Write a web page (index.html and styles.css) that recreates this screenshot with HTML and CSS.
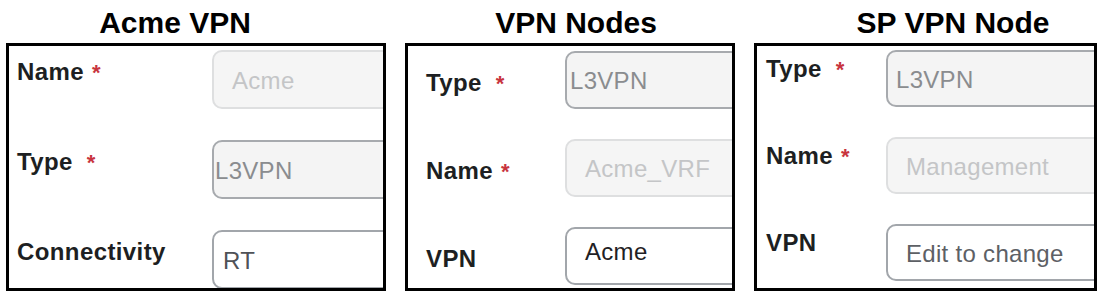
FILE: index.html
```html
<!DOCTYPE html>
<html lang="en">
<head>
  <meta charset="UTF-8" />
  <title>VPN forms</title>
  <link rel="stylesheet" href="styles.css">
</head>
<body>
  <div class="board">

    <!-- Acme VPN -->
    <section class="card card-acme">
      <h2 class="card-title">Acme VPN</h2>
      <div class="panel">
        <div class="row">
          <span class="label">Name<span class="req">*</span></span>
          <span class="field is-disabled">Acme</span>
        </div>
        <div class="row">
          <span class="label">Type<span class="req req-wide">*</span></span>
          <span class="field is-locked shift-1">L3VPN</span>
        </div>
        <div class="row">
          <span class="label">Connectivity</span>
          <span class="field shift-9">RT</span>
        </div>
      </div>
    </section>

    <!-- VPN Nodes -->
    <section class="card card-nodes">
      <h2 class="card-title">VPN Nodes</h2>
      <div class="panel">
        <div class="row">
          <span class="label">Type<span class="req req-wide">*</span></span>
          <span class="field is-locked shift-3">L3VPN</span>
        </div>
        <div class="row">
          <span class="label">Name<span class="req">*</span></span>
          <span class="field is-disabled">Acme_VRF</span>
        </div>
        <div class="row">
          <span class="label">VPN</span>
          <span class="field lift">Acme</span>
        </div>
      </div>
    </section>

    <!-- SP VPN Node -->
    <section class="card card-sp">
      <h2 class="card-title">SP VPN Node</h2>
      <div class="panel">
        <div class="row">
          <span class="label">Type<span class="req req-wide">*</span></span>
          <span class="field is-locked shift-8">L3VPN</span>
        </div>
        <div class="row">
          <span class="label">Name<span class="req">*</span></span>
          <span class="field is-disabled">Management</span>
        </div>
        <div class="row">
          <span class="label">VPN</span>
          <span class="field muted">Edit to change</span>
        </div>
      </div>
    </section>

  </div>
</body>
</html>
```

FILE: styles.css
```css
/* Reset */
* {
  margin: 0;
  padding: 0;
  box-sizing: border-box;
}

body {
  font-family: "Liberation Sans", Arial, Helvetica, sans-serif;
  background: #fff;
  color: #1d1f22;
}

.board {
  display: flex;
  gap: 19px;
  padding: 6px 0 0 6px;
}

.card {
  display: flex;
  flex-direction: column;
}

.card-acme {
  width: 380px;
  --top: 4px;
  --left: 8px;
  --gap: 31px;
  --field-h: 59px;
  --label-w: 195px;
  --label-top: 8px;
}

.card-nodes {
  width: 330px;
  --top: 5px;
  --left: 18px;
  --gap: 30px;
  --field-h: 58px;
  --label-w: 139px;
  --label-top: 18px;
}

.card-sp {
  width: 343px;
  --top: 4px;
  --left: 9px;
  --gap: 30px;
  --field-h: 57px;
  --label-w: 120px;
  --label-top: 5px;
}

.card-title {
  font-size: 30px;
  line-height: 34px;
  font-weight: bold;
  text-align: center;
  color: #000;
  margin-bottom: 3px;
}

.card-acme .card-title {
  padding-right: 42px;
}

.card-nodes .card-title {
  padding-left: 12px;
}

.card-sp .card-title {
  padding-left: 55px;
}

/* Framed form crop */
.panel {
  height: 248px;
  border: 3px solid #000;
  overflow: hidden;
  display: flex;
  flex-direction: column;
  gap: var(--gap);
  padding: var(--top) 0 0 var(--left);
}

.row {
  display: flex;
  align-items: flex-start;
}

.label {
  flex: 0 0 var(--label-w);
  font-size: 24px;
  line-height: 28px;
  font-weight: bold;
  letter-spacing: 0.4px;
  padding-top: var(--label-top);
  white-space: nowrap;
}

.req {
  color: #c8343e;
  font-size: 22px;
  margin-left: 8px;
}

.req-wide {
  margin-left: 14px;
}

/* Inputs, cut off by the right edge of the frame */
.field {
  flex: 1 0 auto;
  margin-right: -14px;
  height: var(--field-h);
  display: flex;
  align-items: center;
  padding: 2px 0 0 18px;
  border: 2px solid #a2a6ab;
  border-radius: 10px;
  background: #fff;
  color: #4f5257;
  font-size: 24px;
  line-height: 28px;
  letter-spacing: 0.3px;
  white-space: nowrap;
}

.field.is-disabled {
  border-color: #dedfe0;
  background: #f5f5f5;
  color: #c4c5c7;
}

.field.is-locked {
  border-color: #a7aaae;
  background: #f4f4f4;
  color: #8a8c8f;
}

.field.lift {
  padding-top: 0;
  padding-bottom: 8px;
  color: #1f2124;
}

.field.muted {
  color: #5d6065;
}

.shift-1 { padding-left: 1px; }
.shift-3 { padding-left: 3px; }
.shift-8 { padding-left: 8px; }
.shift-9 { padding-left: 9px; }
```
